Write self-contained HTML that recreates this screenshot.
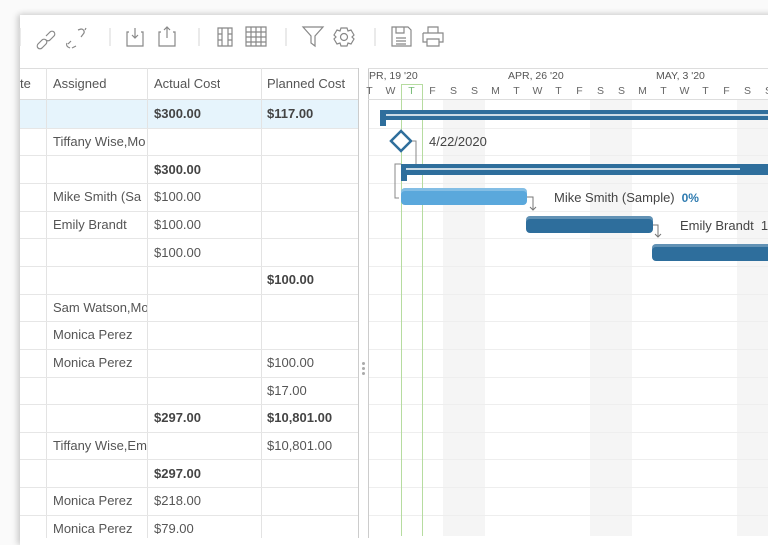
<!DOCTYPE html><html><head><meta charset="utf-8"><style>
*{margin:0;padding:0;box-sizing:border-box}
body{width:768px;height:536px;overflow:hidden;background:#fafafa;font-family:"Liberation Sans",sans-serif;color:#555;position:relative}
#panel{position:absolute;left:20px;top:15px;width:760px;height:530px;background:#fff;box-shadow:-3px 0 6px rgba(0,0,0,.15),0 -2px 6px rgba(0,0,0,.08)}
.a{position:absolute}
.t{position:absolute;font-size:13px;white-space:nowrap;overflow:hidden}
.b{font-weight:bold;color:#444}
.hl{position:absolute;height:1px;background:#e6e6e6}
.vl{position:absolute;width:1px;background:#e3e3e3}
.d{position:absolute;font-size:10.5px;color:#666;width:21px;text-align:center}
.bar{position:absolute;height:17px;border-radius:4px;background:#2e6e9c;box-shadow:inset 0 3px 0 rgba(255,255,255,.25)}
</style></head><body>
<div id="panel"></div>
<svg class="a" style="left:0;top:15px" width="470" height="45" viewBox="0 15 470 45" fill="none" stroke="#888" stroke-width="1.2">
<line x1="20" y1="28" x2="20" y2="46" stroke="#ddd"/>
<path d="M38 44l4-4a3 3 0 014 0a3 3 0 010 4l-4 4a3 3 0 01-4 0a3 3 0 010-4zM46 36l4-4a3 3 0 014 0a3 3 0 010 4l-4 4a3 3 0 01-4 0"/>
<path d="M68 44l3-3M70 48l-2-1a3 3 0 01-1-4M78 30l3-1a3 3 0 013 4l-3 4M85 30l1-2M72 48l4-2"/>
<line x1="110" y1="28" x2="110" y2="46" stroke="#ddd"/>
<path d="M129 32h-2v14h16v-14h-2M135 28v10M132 35l3 3 3-3"/>
<path d="M161 32h-2v14h16v-14h-2M167 38v-11M164 30l3-3 3 3"/>
<line x1="199" y1="28" x2="199" y2="46" stroke="#ddd"/>
<path d="M218 28h14v18h-14zM222 28v18M228 28v18M218 34h4M218 40h4M228 34h4M228 40h4"/>
<path d="M246 27h20v19h-20zM246 32h20M246 37h20M246 42h20M251 27v19M256 27v19M261 27v19"/>
<line x1="286" y1="28" x2="286" y2="46" stroke="#ddd"/>
<path d="M303 27h20l-8 9v10l-4-3v-7z"/>
<circle cx="344" cy="37" r="3.5"/><path d="M341 28h6l1 3 3-1 3 5-2 2 2 2-3 5-3-1-1 3h-6l-1-3-3 1-3-5 2-2-2-2 3-5 3 1z"/>
<line x1="375" y1="28" x2="375" y2="46" stroke="#ddd"/>
<path d="M392 27h16l3 3v16h-19zM396 27v6h8v-6M396 38h10M396 41h10M396 44h10"/>
<path d="M428 33v-6h10v6M423 33h20v9h-4M427 42h-4v-9M427 39h12v7h-12z"/>
</svg>
<div class="a" style="left:20px;top:68px;width:338px;height:32px;border-top:1px solid #ddd;border-bottom:1px solid #ddd"></div>
<div class="t" style="left:20px;top:76px">te</div>
<div class="t" style="left:53px;top:76px">Assigned</div>
<div class="t" style="left:154px;top:76px">Actual Cost</div>
<div class="t" style="left:267px;top:76px">Planned Cost</div>
<div class="a" style="left:20px;top:100px;width:338px;height:28px;background:#e6f4fc"></div>
<div class="vl" style="left:46px;top:68px;height:470px"></div>
<div class="vl" style="left:147px;top:68px;height:470px"></div>
<div class="vl" style="left:261px;top:68px;height:470px"></div>
<div class="vl" style="left:358px;top:68px;height:470px;background:#ccc"></div>
<div class="vl" style="left:368px;top:68px;height:470px;background:#ccc"></div>
<div class="a" style="left:362px;top:362px;width:3px;height:3px;border-radius:2px;background:#aaa;box-shadow:0 5px #aaa,0 10px #aaa"></div>
<div class="a" style="left:368px;top:68px;width:400px;height:32px;border-top:1px solid #ddd;border-bottom:1px solid #ddd"></div>
<div class="a" style="left:443px;top:100px;width:42px;height:436px;background:#f5f5f5"></div>
<div class="a" style="left:590px;top:100px;width:42px;height:436px;background:#f5f5f5"></div>
<div class="a" style="left:737px;top:100px;width:42px;height:436px;background:#f5f5f5"></div>
<div id="rows"></div>
<script>
var r=document.getElementById('rows'),h='';
for(var i=1;i<16;i++){var y=Math.round(100+i*27.65);h+='<div class="hl" style="left:20px;top:'+y+'px;width:338px"></div><div class="hl" style="left:369px;top:'+y+'px;width:400px;background:#eee"></div>';}
var days="TWTFSSMTWTFSSMTWTFSS";for(var k=0;k<days.length;k++){h+='<div class="d" style="left:'+(359+21*k)+'px;top:85px;'+(k==2?'color:#7b7':'')+'">'+days[k]+'</div>';}
r.innerHTML=h;
</script>
<div class="a" style="left:401px;top:84px;width:22px;height:452px;border-left:1px solid #b6dca0;border-right:1px solid #b6dca0;border-top:1px solid #b6dca0"></div>
<div class="t" style="left:369px;top:70px;font-size:10.5px">PR, 19 '20</div>
<div class="t" style="left:508px;top:70px;font-size:10.5px">APR, 26 '20</div>
<div class="t" style="left:656px;top:70px;font-size:10.5px">MAY, 3 '20</div>
<div class="t b" style="left:154px;top:106px">$300.00</div><div class="t b" style="left:267px;top:106px">$117.00</div>
<div class="t" style="left:53px;top:134px;width:94px">Tiffany Wise,Mo</div>
<div class="t b" style="left:154px;top:162px">$300.00</div>
<div class="t" style="left:53px;top:189px;width:94px">Mike Smith (Sa</div><div class="t" style="left:154px;top:189px">$100.00</div>
<div class="t" style="left:53px;top:217px">Emily Brandt</div><div class="t" style="left:154px;top:217px">$100.00</div>
<div class="t" style="left:154px;top:245px">$100.00</div>
<div class="t b" style="left:267px;top:272px">$100.00</div>
<div class="t" style="left:53px;top:300px;width:94px">Sam Watson,Mo</div>
<div class="t" style="left:53px;top:327px">Monica Perez</div>
<div class="t" style="left:53px;top:355px">Monica Perez</div><div class="t" style="left:267px;top:355px">$100.00</div>
<div class="t" style="left:267px;top:383px">$17.00</div>
<div class="t b" style="left:154px;top:410px">$297.00</div><div class="t b" style="left:267px;top:410px">$10,801.00</div>
<div class="t" style="left:53px;top:438px;width:94px">Tiffany Wise,Em</div><div class="t" style="left:267px;top:438px">$10,801.00</div>
<div class="t b" style="left:154px;top:466px">$297.00</div>
<div class="t" style="left:53px;top:493px">Monica Perez</div><div class="t" style="left:154px;top:493px">$218.00</div>
<div class="t" style="left:53px;top:521px">Monica Perez</div><div class="t" style="left:154px;top:521px">$79.00</div>
<svg class="a" style="left:368px;top:100px" width="400" height="170" viewBox="368 100 400 170">
<path d="M380 110h390v10h-384v6l-6 0z" fill="#2e6e9c"/><line x1="386" y1="115" x2="770" y2="115" stroke="#fff" stroke-width="1.5"/>
<path d="M401 131l10 10-10 10-10-10z" fill="#fff" stroke="#2e6e9c" stroke-width="2.5"/>
<path d="M412 141h4v25M401 164h-6v34h4" fill="none" stroke="#888"/>
<path d="M401 164h370v11h-364v6l-6 0z" fill="#2e6e9c"/><line x1="406" y1="169" x2="740" y2="169" stroke="#fff" stroke-width="1.5"/>
<path d="M527 197h6v13M530 207l3 3 3-3M653 225h5v12M655 234l3 3 3-3" fill="none" stroke="#777"/>
</svg>
<div class="bar" style="left:401px;top:188px;width:126px;background:#5aa8dc"></div>
<div class="bar" style="left:526px;top:216px;width:127px"></div>
<div class="bar" style="left:652px;top:244px;width:130px"></div>
<div class="t" style="left:554px;top:190px;color:#444">Mike Smith (Sample) <b style="color:#2e7bb0;font-size:12px">&nbsp;0%</b></div>
<div class="t" style="left:680px;top:218px;color:#444">Emily Brandt &nbsp;1</div>
<div class="t" style="left:429px;top:134px;color:#444">4/22/2020</div>
</body></html>
